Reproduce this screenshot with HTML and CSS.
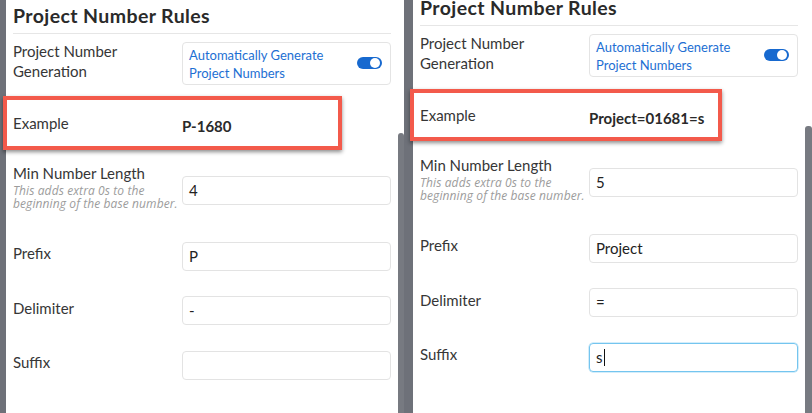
FILE: index.html
```html
<!DOCTYPE html>
<html>
<head>
<meta charset="utf-8">
<link rel="stylesheet" href="styles.css">
</head>
<body>
<div class="stage">
  <section class="panel">
    <div class="content">
      <h2 class="title">Project Number Rules</h2>
      <div class="row row-gen">
        <div class="label label-gen">Project Number<br>Generation</div>
        <div class="gen-box">
          <span class="gen-text">Automatically Generate<br>Project Numbers</span>
          <span class="toggle"><span class="knob"></span></span>
        </div>
      </div>
      <div class="row row-example">
        <div class="label">Example</div>
        <div class="example-value">P-1680</div>
      </div>
      <div class="row row-min">
        <div>
          <div class="label">Min Number Length</div>
          <div class="help">This adds extra 0s to the<br>beginning of the base number.</div>
        </div>
        <div class="input input-min">4</div>
      </div>
      <div class="row row-prefix">
        <div class="label label-prefix">Prefix</div>
        <div class="input">P</div>
      </div>
      <div class="row row-delim">
        <div class="label label-delim">Delimiter</div>
        <div class="input">-</div>
      </div>
      <div class="row row-suffix">
        <div class="label label-suffix">Suffix</div>
        <div class="input"></div>
      </div>
      <div class="annot annot-left"></div>
    </div>
    <div class="scroll"><div class="thumb thumb-left"></div></div>
  </section>

  <section class="panel panel-right">
    <div class="content">
      <h2 class="title title-right">Project Number Rules</h2>
      <div class="row row-gen">
        <div class="label label-gen">Project Number<br>Generation</div>
        <div class="gen-box">
          <span class="gen-text">Automatically Generate<br>Project Numbers</span>
          <span class="toggle"><span class="knob"></span></span>
        </div>
      </div>
      <div class="row row-example">
        <div class="label">Example</div>
        <div class="example-value">Project=01681=s</div>
      </div>
      <div class="row row-min">
        <div>
          <div class="label">Min Number Length</div>
          <div class="help">This adds extra 0s to the<br>beginning of the base number.</div>
        </div>
        <div class="input input-min">5</div>
      </div>
      <div class="row row-prefix">
        <div class="label label-prefix">Prefix</div>
        <div class="input">Project</div>
      </div>
      <div class="row row-delim">
        <div class="label label-delim">Delimiter</div>
        <div class="input">=</div>
      </div>
      <div class="row row-suffix">
        <div class="label label-suffix">Suffix</div>
        <div class="input input-focus">s<span class="caret"></span></div>
      </div>
      <div class="annot annot-right"></div>
    </div>
    <div class="scroll scroll-right"><div class="thumb thumb-right"></div></div>
  </section>
</div>
</body>
</html>
```

FILE: styles.css
```css
html, body {
  margin: 0;
  padding: 0;
  height: 100%;
  overflow: hidden;
}
body {
  background: #6e7179;
  font-family: Lato, "Open Sans", sans-serif;
  color: #353535;
}
.stage {
  display: flex;
  gap: 9px;
  padding-left: 6px;
  height: 413px;
}
.panel {
  background: #ffffff;
  width: 398px;
  height: 413px;
  display: flex;
  position: relative;
}
.panel-right {
  width: 399px;
}
.content {
  position: relative;
  width: 378px;
  padding-left: 7px;
  padding-right: 7px;
}
.title {
  margin: 0;
  font-size: 19.5px;
  letter-spacing: 0.4px;
  font-weight: 700;
  line-height: 16px;
  padding-top: 8px;
  padding-bottom: 9px;
  color: #2a2a2a;
  border-bottom: 1px solid #e6e6e6;
}
.title-right {
  padding-top: 0;
}
.row {
  display: grid;
  grid-template-columns: 169px 209px;
  align-items: start;
}
.label {
  font-size: 15px;
  line-height: 20px;
  color: #363636;
}
.row-gen { margin-top: 8px; }
.label-gen { margin-top: -1px; }
.gen-box {
  box-sizing: border-box;
  height: 43px;
  border: 1px solid #e4e4e4;
  border-radius: 4px;
  padding: 3px 8px 3px 6px;
  display: flex;
  align-items: center;
  justify-content: space-between;
}
.gen-text {
  font-size: 13px;
  line-height: 18px;
  color: #1d6fd3;
}
.toggle {
  width: 25px;
  height: 12px;
  border-radius: 6px;
  background: #1769cf;
  position: relative;
  margin-top: -1px;
}
.knob {
  position: absolute;
  right: 2px;
  top: 1px;
  width: 10px;
  height: 10px;
  border-radius: 50%;
  background: #ffffff;
}
.row-example { margin-top: 28px; }
.example-value {
  margin-top: 3px;
  font-size: 15px;
  line-height: 20px;
  font-weight: 700;
  color: #2a2a2a;
}
.row-min { margin-top: 27px; }
.help {
  margin-top: 1px;
  font-family: "Open Sans", Lato, sans-serif;
  font-size: 12px;
  letter-spacing: 0.1px;
  line-height: 13px;
  font-style: italic;
  color: #9c9c9c;
}
.input {
  box-sizing: border-box;
  height: 29px;
  border: 1px solid #e3e3e3;
  border-radius: 4px;
  padding-left: 6px;
  font-size: 15px;
  line-height: 27px;
  color: #222222;
  display: flex;
  align-items: center;
}
.input-min { margin-top: 13px; }
.row-prefix { margin-top: 32px; }
.label-prefix { margin-top: 1px; }
.row-delim { margin-top: 25px; }
.label-delim { margin-top: 2px; }
.row-suffix { margin-top: 26px; }
.label-suffix { margin-top: 1px; }
.input-focus {
  border-color: #74c5ef;
  box-shadow: 0 0 0 0.5px #a9dcf5;
}
.caret {
  display: inline-block;
  width: 1px;
  height: 17px;
  background: #111111;
  margin-left: 1px;
}
.annot {
  position: absolute;
  left: -3px;
  border: 4px solid #f35a4b;
  box-shadow: 0 2px 4px rgba(0, 0, 0, 0.45);
  box-sizing: border-box;
}
.annot-left {
  top: 96px;
  width: 339px;
  height: 54px;
}
.annot-right {
  top: 89px;
  width: 312px;
  height: 52px;
}
.scroll {
  width: 6px;
  display: flex;
  flex-direction: column;
}
.scroll-right {
  width: 7px;
}
.thumb {
  flex: 1;
  background: #777a81;
  border-radius: 3px 3px 0 0;
}
.thumb-left { margin-top: 133px; }
.thumb-right { margin-top: 126px; }
```
